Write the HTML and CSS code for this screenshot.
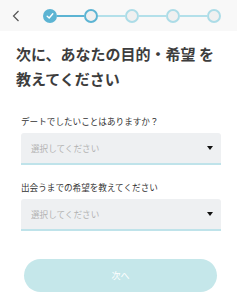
FILE: index.html
```html
<!DOCTYPE html>
<html lang="ja">
<head>
<meta charset="utf-8">
<link rel="stylesheet" href="styles.css">
</head>
<body>
<header class="topbar">
  <span class="back">
    <svg width="8" height="12" viewBox="0 0 8 12"><path d="M6.5 1 L1.5 6 L6.5 11" fill="none" stroke="#555" stroke-width="1.2"/></svg>
  </span>
  <div class="stepper">
    <span class="dot done">
      <svg width="8" height="8" viewBox="0 0 8 8"><path d="M1.2 4.2 L3.2 6 L6.8 1.8" fill="none" stroke="#fff" stroke-width="1.4" stroke-linecap="round" stroke-linejoin="round"/></svg>
    </span>
    <span class="line active"></span>
    <span class="dot current"></span>
    <span class="line"></span>
    <span class="dot"></span>
    <span class="line"></span>
    <span class="dot"></span>
    <span class="line"></span>
    <span class="dot"></span>
  </div>
</header>
<main class="content">
  <h1 class="title">次に、あなたの目的・希望 を<br>教えてください</h1>
  <div class="field">
    <label class="label">デートでしたいことはありますか？</label>
    <div class="select"><span class="placeholder">選択してください</span><span class="caret"></span></div>
  </div>
  <div class="field">
    <label class="label">出会うまでの希望を教えてください</label>
    <div class="select"><span class="placeholder">選択してください</span><span class="caret"></span></div>
  </div>
  <button class="next">次へ</button>
</main>
</body>
</html>
```

FILE: styles.css
```css
* { box-sizing: border-box; }
html, body { margin: 0; padding: 0; background: #fff; }
body {
  font-family: "Noto Sans CJK JP", "Noto Sans", sans-serif;
  color: #333;
  width: 237px;
  overflow: hidden;
}
.topbar {
  height: 31px;
  background: #f8f8f8;
  display: flex;
  align-items: center;
  padding-left: 12px;
}
.back {
  display: flex;
  width: 8px;
  height: 12px;
  margin-right: 22.5px;
  margin-top: 1px;
}
.stepper {
  display: flex;
  align-items: center;
  margin-top: 1px;
}
.dot {
  width: 14px;
  height: 14px;
  border-radius: 50%;
  border: 2px solid #acdce7;
  background: #f0f0f0;
  display: flex;
  align-items: center;
  justify-content: center;
  flex: none;
}
.dot.current { border-color: #5cb4d3; }
.dot.done { background: #5cb4d3; border-color: #5cb4d3; }
.line {
  width: 27px;
  height: 1.5px;
  background: #b3e0ea;
  flex: none;
}
.line.active { background: #5cb4d3; }
.content {
  padding: 10px 16px 0 16px;
}
.title {
  margin: 0;
  font-size: 15px;
  line-height: 25px;
  font-weight: 700;
  color: #3d3d3d;
}
.field {
  padding-left: 5px;
  margin-top: 24px;
}
.field + .field { margin-top: 16px; }
.label {
  display: block;
  font-size: 8.6px;
  line-height: 12px;
  color: #333;
  margin-bottom: 6px;
}
.select {
  width: 200px;
  height: 32px;
  background: #eef0f2;
  border-radius: 3px 3px 0 0;
  border-bottom: 2px solid #bfe3ea;
  display: flex;
  align-items: center;
  justify-content: space-between;
  padding: 0 8px 0 10px;
}
.placeholder {
  font-size: 8.6px;
  color: #b3b3b3;
}
.caret {
  width: 0;
  height: 0;
  border-left: 3.5px solid transparent;
  border-right: 3.5px solid transparent;
  border-top: 4.5px solid #111;
}
.next {
  display: block;
  margin: 28px 0 0 8px;
  width: 193px;
  height: 33px;
  border: none;
  border-radius: 17px;
  background: #c5e7ea;
  color: #fff;
  font-family: "Noto Sans CJK JP", sans-serif;
  font-size: 9px;
  padding: 0;
}
```
